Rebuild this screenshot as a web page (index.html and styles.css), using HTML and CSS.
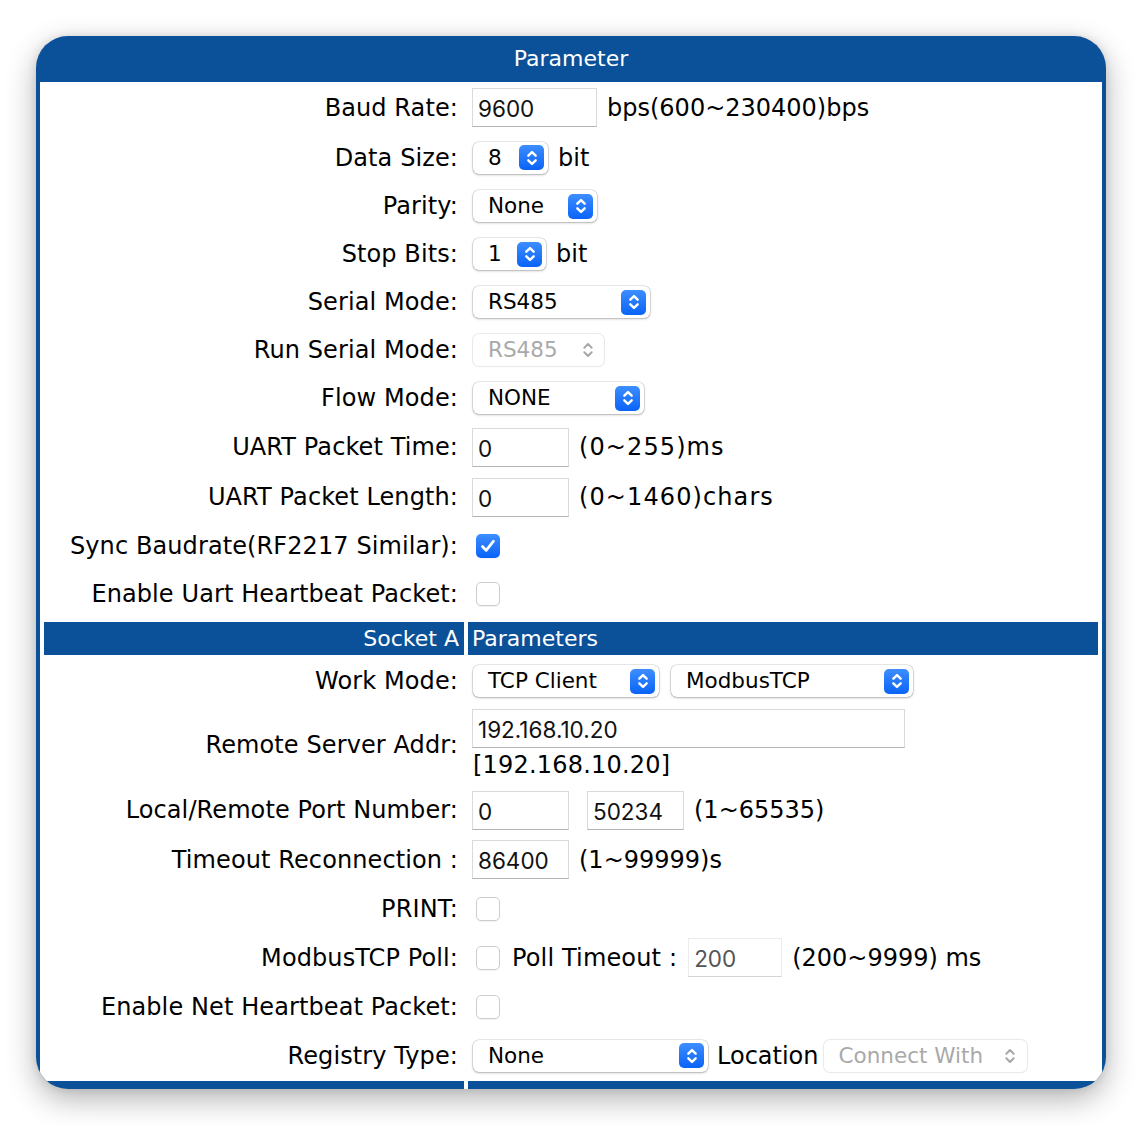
FILE: index.html
```html
<!DOCTYPE html>
<html>
<head>
<meta charset="utf-8">
<title>Parameter</title>
<link rel="stylesheet" href="styles.css">
</head>
<body>
<div class="window">
  <div class="title">Parameter</div>
  <div class="body">
    <div class="row h51">
      <div class="lbl">Baud Rate:</div>
      <div class="val"><input class="txt w125" value="9600"><span class="unit">bps(600~230400)bps</span></div>
    </div>
    <div class="row h49">
      <div class="lbl">Data Size:</div>
      <div class="val">
        <div class="sel w75"><span class="sel-text">8</span><span class="sel-btn"><svg viewBox="0 0 24 24" width="22" height="22"><path d="M8 9.5l4-4 4 4M8 14.5l4 4 4-4" fill="none" stroke="#fff" stroke-width="2.6" stroke-linecap="round" stroke-linejoin="round"/></svg></span></div>
        <span class="unit">bit</span>
      </div>
    </div>
    <div class="row h48">
      <div class="lbl">Parity:</div>
      <div class="val">
        <div class="sel w124"><span class="sel-text">None</span><span class="sel-btn"><svg viewBox="0 0 24 24" width="22" height="22"><path d="M8 9.5l4-4 4 4M8 14.5l4 4 4-4" fill="none" stroke="#fff" stroke-width="2.6" stroke-linecap="round" stroke-linejoin="round"/></svg></span></div>
      </div>
    </div>
    <div class="row h48">
      <div class="lbl">Stop Bits:</div>
      <div class="val">
        <div class="sel w73"><span class="sel-text">1</span><span class="sel-btn"><svg viewBox="0 0 24 24" width="22" height="22"><path d="M8 9.5l4-4 4 4M8 14.5l4 4 4-4" fill="none" stroke="#fff" stroke-width="2.6" stroke-linecap="round" stroke-linejoin="round"/></svg></span></div>
        <span class="unit">bit</span>
      </div>
    </div>
    <div class="row h48">
      <div class="lbl">Serial Mode:</div>
      <div class="val">
        <div class="sel w177"><span class="sel-text">RS485</span><span class="sel-btn"><svg viewBox="0 0 24 24" width="22" height="22"><path d="M8 9.5l4-4 4 4M8 14.5l4 4 4-4" fill="none" stroke="#fff" stroke-width="2.6" stroke-linecap="round" stroke-linejoin="round"/></svg></span></div>
      </div>
    </div>
    <div class="row h48">
      <div class="lbl">Run Serial Mode:</div>
      <div class="val">
        <div class="sel dis w131"><span class="sel-text">RS485</span><span class="sel-btn"><svg viewBox="0 0 24 24" width="22" height="22"><path d="M8 9.5l4-4 4 4M8 14.5l4 4 4-4" fill="none" stroke="#a8a8a8" stroke-width="2.2" stroke-linecap="round" stroke-linejoin="round"/></svg></span></div>
      </div>
    </div>
    <div class="row h48">
      <div class="lbl">Flow Mode:</div>
      <div class="val">
        <div class="sel w171"><span class="sel-text">NONE</span><span class="sel-btn"><svg viewBox="0 0 24 24" width="22" height="22"><path d="M8 9.5l4-4 4 4M8 14.5l4 4 4-4" fill="none" stroke="#fff" stroke-width="2.6" stroke-linecap="round" stroke-linejoin="round"/></svg></span></div>
      </div>
    </div>
    <div class="row h50">
      <div class="lbl">UART Packet Time:</div>
      <div class="val"><input class="txt w97" value="0"><span class="unit wide">(0~255)ms</span></div>
    </div>
    <div class="row h50">
      <div class="lbl">UART Packet Length:</div>
      <div class="val"><input class="txt w97" value="0"><span class="unit wide">(0~1460)chars</span></div>
    </div>
    <div class="row h48">
      <div class="lbl">Sync Baudrate(RF2217 Similar):</div>
      <div class="val"><span class="cb on"><svg viewBox="0 0 24 24" width="22" height="22"><path d="M6 12.5l4 4.3 8-10" fill="none" stroke="#fff" stroke-width="3" stroke-linecap="round" stroke-linejoin="round"/></svg></span></div>
    </div>
    <div class="row h48">
      <div class="lbl">Enable Uart Heartbeat Packet:</div>
      <div class="val"><span class="cb"></span></div>
    </div>

    <div class="row head">
      <div class="hcell right">Socket A</div>
      <div class="hcell">Parameters</div>
    </div>

    <div class="row h44">
      <div class="lbl">Work Mode:</div>
      <div class="val">
        <div class="sel w186"><span class="sel-text">TCP Client</span><span class="sel-btn"><svg viewBox="0 0 24 24" width="22" height="22"><path d="M8 9.5l4-4 4 4M8 14.5l4 4 4-4" fill="none" stroke="#fff" stroke-width="2.6" stroke-linecap="round" stroke-linejoin="round"/></svg></span></div>
        <div class="sel w242 ml12"><span class="sel-text">ModbusTCP</span><span class="sel-btn"><svg viewBox="0 0 24 24" width="22" height="22"><path d="M8 9.5l4-4 4 4M8 14.5l4 4 4-4" fill="none" stroke="#fff" stroke-width="2.6" stroke-linecap="round" stroke-linejoin="round"/></svg></span></div>
      </div>
    </div>
    <div class="row h83">
      <div class="lbl">Remote Server Addr:</div>
      <div class="val stack"><input class="txt w433" value="192.168.10.20"><span class="resolved">[192.168.10.20]</span></div>
    </div>
    <div class="row h48">
      <div class="lbl">Local/Remote Port Number:</div>
      <div class="val"><input class="txt w97" value="0"><input class="txt w97 gap18" value="50234"><span class="unit">(1~65535)</span></div>
    </div>
    <div class="row h51">
      <div class="lbl">Timeout Reconnection :</div>
      <div class="val"><input class="txt w97" value="86400"><span class="unit">(1~99999)s</span></div>
    </div>
    <div class="row h47">
      <div class="lbl">PRINT:</div>
      <div class="val"><span class="cb"></span></div>
    </div>
    <div class="row h51">
      <div class="lbl">ModbusTCP Poll:</div>
      <div class="val"><span class="cb"></span><span class="poll">Poll Timeout :</span><input class="txt w94 ghost" value="200"><span class="unit">(200~9999) ms</span></div>
    </div>
    <div class="row h47">
      <div class="lbl">Enable Net Heartbeat Packet:</div>
      <div class="val"><span class="cb"></span></div>
    </div>
    <div class="row h51">
      <div class="lbl">Registry Type:</div>
      <div class="val">
        <div class="sel w235"><span class="sel-text">None</span><span class="sel-btn"><svg viewBox="0 0 24 24" width="22" height="22"><path d="M8 9.5l4-4 4 4M8 14.5l4 4 4-4" fill="none" stroke="#fff" stroke-width="2.6" stroke-linecap="round" stroke-linejoin="round"/></svg></span></div>
        <span class="loc">Location</span>
        <div class="sel dis w203"><span class="sel-text">Connect With</span><span class="sel-btn"><svg viewBox="0 0 24 24" width="22" height="22"><path d="M8 9.5l4-4 4 4M8 14.5l4 4 4-4" fill="none" stroke="#a8a8a8" stroke-width="2.2" stroke-linecap="round" stroke-linejoin="round"/></svg></span></div>
      </div>
    </div>
  </div>
  <div class="foot"><div class="foot-l"></div><div class="foot-gap"></div><div class="foot-r"></div></div>
</div>
</body>
</html>
```

FILE: styles.css
```css
html, body {
  margin: 0;
  padding: 0;
  background: #ffffff;
}
body {
  padding: 36px;
  font-family: "DejaVu Sans", Verdana, sans-serif;
  font-size: 24px;
  color: #000;
}
.window {
  width: 1070px;
  height: 1053px;
  background: #0b5199;
  border-radius: 32px;
  overflow: hidden;
  box-shadow: 0 10px 30px rgba(0, 0, 0, 0.3), 0 0 8px rgba(0, 0, 0, 0.1);
  display: flex;
  flex-direction: column;
}
.title {
  height: 46px;
  line-height: 46px;
  text-align: center;
  color: #fff;
  font-size: 22px;
  flex: none;
}
.body {
  background: #fff;
  margin: 0 4px;
  height: 999px;
  flex: none;
}
.row {
  display: grid;
  grid-template-columns: 420px 630px;
  column-gap: 4px;
  padding: 0 4px;
  align-items: center;
}
.h44 { height: 44px; }
.h47 { height: 47px; }
.h48 { height: 48px; }
.h49 { height: 49px; }
.h50 { height: 50px; }
.h51 { height: 51px; }
.h83 { height: 83px; }
.lbl {
  text-align: right;
  padding-right: 6px;
  white-space: nowrap;
  line-height: 28px;
  letter-spacing: 0.1px;
}
.val {
  display: flex;
  align-items: center;
  padding-left: 4px;
  white-space: nowrap;
  line-height: 28px;
}
.val.stack {
  flex-direction: column;
  align-items: flex-start;
  align-self: stretch;
  padding-top: 6px;
}
.unit {
  margin-left: 10px;
}
.unit.wide {
  letter-spacing: 1.1px;
}
.poll {
  margin-left: 12px;
  letter-spacing: 0.15px;
}
.resolved {
  line-height: 28px;
  margin-top: 3px;
  margin-left: 1px;
  letter-spacing: 0.2px;
}
.loc {
  margin-left: 9px;
  margin-right: 4px;
}

.head {
  height: 33px;
  margin: 4px 0;
}
.hcell {
  background: #0b5199;
  color: #fff;
  font-size: 22px;
  height: 33px;
  line-height: 33px;
  padding-left: 4px;
}
.hcell.right {
  text-align: right;
  padding-left: 0;
  padding-right: 5px;
}

.txt {
  -webkit-appearance: none;
  appearance: none;
  box-sizing: border-box;
  height: 39px;
  border: 1px solid #dadada;
  border-bottom-color: #b3b3b3;
  border-radius: 0;
  background: #fff;
  font-family: Inter, "Liberation Sans", sans-serif;
  font-size: 22.5px;
  color: #111;
  padding: 2px 5px 0;
  margin: 0;
  outline: none;
  flex: none;
}
.txt.gap18 {
  margin-left: 18px;
}
.txt.ghost {
  border-color: #ececec;
  border-bottom-color: #d4d4d4;
  color: #555;
  margin-left: 11px;
}
.w94 { width: 94px; }
.w97 { width: 97px; }
.w125 { width: 125px; }
.w433 { width: 433px; }

.sel {
  box-sizing: border-box;
  height: 32px;
  display: flex;
  align-items: center;
  background: #fff;
  border-radius: 6px;
  box-shadow: 0 0 0 0.6px rgba(0, 0, 0, 0.16), 0 1px 2.5px rgba(0, 0, 0, 0.25);
  padding: 0 4px 0 15px;
  font-size: 21.5px;
  margin-left: 1px;
  flex: none;
}
.sel.ml12 { margin-left: 12px; }
.sel-text {
  flex: 1;
  line-height: 32px;
}
.sel-btn {
  width: 25px;
  height: 25px;
  border-radius: 5px;
  background: linear-gradient(#3d8eff, #0a63f7);
  display: flex;
  align-items: center;
  justify-content: center;
  flex: none;
}
.sel.dis {
  color: #a9a9a9;
  box-shadow: 0 0 0 1px #e9e9e9, 0 1px 1.5px rgba(0, 0, 0, 0.06);
}
.sel.dis .sel-btn {
  background: none;
}
.w73 { width: 73px; }
.w75 { width: 75px; }
.w124 { width: 124px; }
.w131 { width: 131px; }
.w171 { width: 171px; }
.w177 { width: 177px; }
.w186 { width: 186px; }
.w203 { width: 203px; }
.w235 { width: 235px; }
.w242 { width: 242px; }

.cb {
  box-sizing: border-box;
  width: 24px;
  height: 24px;
  margin-left: 4px;
  border-radius: 5px;
  border: 1px solid #cdcdcd;
  background: #fff;
  box-shadow: 0 1px 1px rgba(0, 0, 0, 0.05);
  display: inline-flex;
  align-items: center;
  justify-content: center;
  flex: none;
}
.cb.on {
  border: none;
  background: linear-gradient(#3d8eff, #0a63f7);
}

.foot {
  height: 8px;
  display: flex;
  flex: none;
}
.foot-l { width: 428px; }
.foot-gap { width: 4px; background: #fff; }
.foot-r { flex: 1; }
```
